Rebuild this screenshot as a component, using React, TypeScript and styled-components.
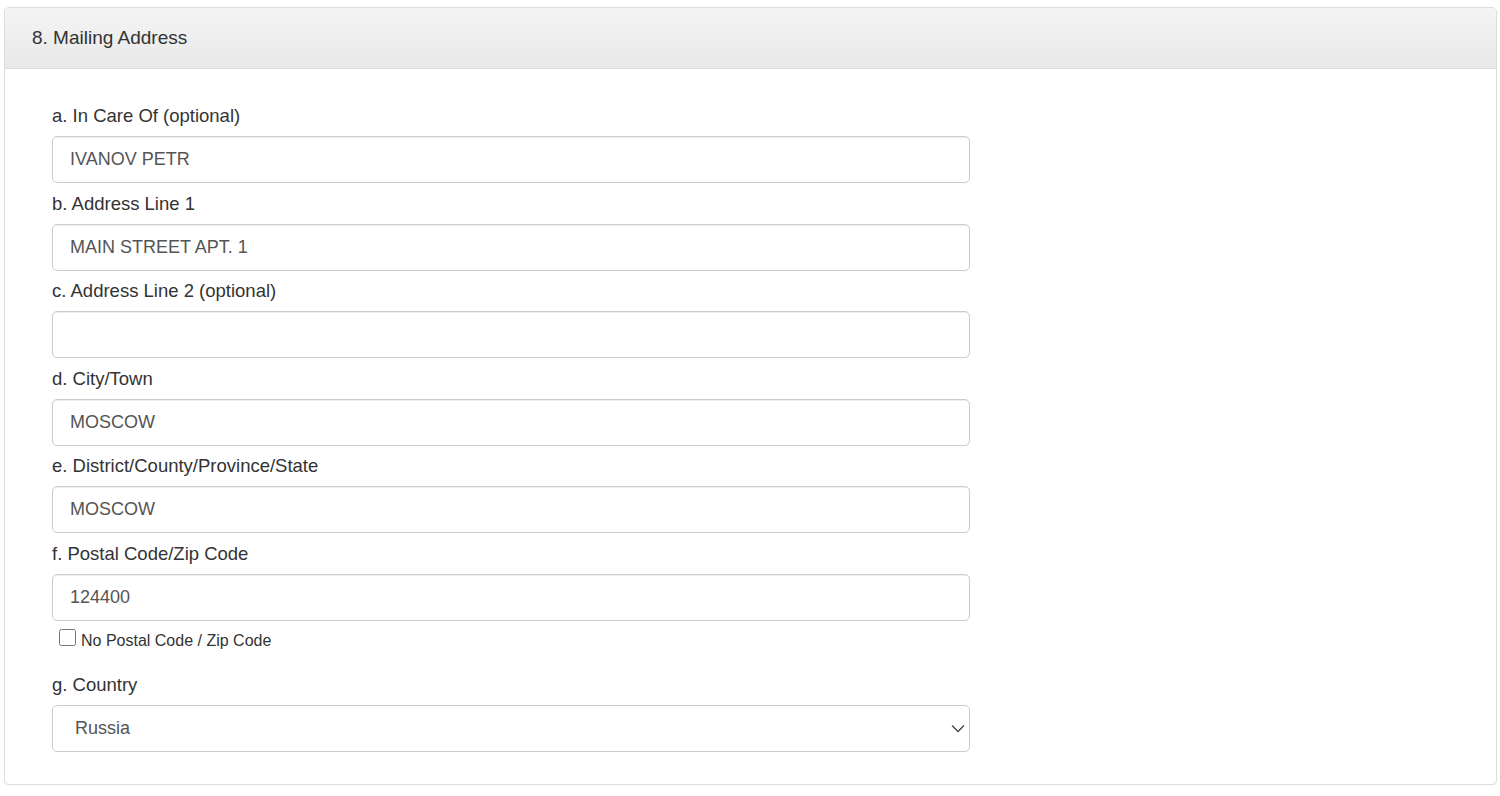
import * as React from 'react'
import styled, { createGlobalStyle } from 'styled-components'

const GlobalStyle = createGlobalStyle`
  html, body {
    margin: 0;
    padding: 0;
    background: #fff;
  }
  body {
    font-family: "Liberation Sans", Arial, Helvetica, sans-serif;
    color: #333;
  }
`

const Page = styled.div`
  padding: 7px 3px 0 4px;
`

const Panel = styled.section`
  border: 1px solid #ddd;
  border-radius: 5px;
  background: #fff;
  box-shadow: 0 1px 1px rgba(0, 0, 0, 0.05);
`

const Heading = styled.header`
  height: 60px;
  display: flex;
  align-items: center;
  padding: 0 27px;
  border-bottom: 1px solid #ddd;
  border-radius: 4px 4px 0 0;
  background: linear-gradient(to bottom, #f5f5f5 0%, #e8e8e8 100%);
  font-size: 19px;
  color: #333;
`

const Body = styled.div`
  padding: 34px 47px 32px;
`

const Group = styled.div<{ $gap?: number }>`
  width: 918px;
  margin-bottom: ${p => (p.$gap ?? 7.5)}px;
`

const Label = styled.label`
  display: block;
  font-size: 18.5px;
  line-height: 26px;
  margin-bottom: 7px;
  color: #333;
`

const Input = styled.input`
  box-sizing: border-box;
  display: block;
  width: 100%;
  height: 47px;
  padding: 0 17px;
  border: 1px solid #ccc;
  border-radius: 5px;
  font-family: inherit;
  font-size: 18px;
  color: #555;
  background: #fff;
  box-shadow: inset 0 1px 1px rgba(0, 0, 0, 0.075);
  outline: none;
`

const SelectWrap = styled.div`
  position: relative;
`

const Select = styled.select`
  box-sizing: border-box;
  display: block;
  width: 100%;
  height: 47px;
  padding: 0 22px;
  border: 1px solid #ccc;
  border-radius: 5px;
  font-family: inherit;
  font-size: 18px;
  color: #555;
  background: #fff;
  appearance: none;
  outline: none;
`

const Chevron = styled.svg`
  position: absolute;
  right: 5px;
  top: 19px;
  pointer-events: none;
`

const CheckRow = styled.label`
  display: flex;
  align-items: center;
  gap: 5px;
  height: 22px;
  margin: 9px 0 20px 7px;
  font-size: 16px;
  color: #333;
`

const Box = styled.input`
  margin: 0;
  width: 17px;
  height: 17px;
  position: relative;
  top: -3px;
  accent-color: #555;
`

const fields = [
  { id: 'careof', label: 'a. In Care Of (optional)', value: 'IVANOV PETR' },
  { id: 'line1', label: 'b. Address Line 1', value: 'MAIN STREET APT. 1' },
  { id: 'line2', label: 'c. Address Line 2 (optional)', value: '' },
  { id: 'city', label: 'd. City/Town', value: 'MOSCOW' },
  { id: 'state', label: 'e. District/County/Province/State', value: 'MOSCOW' },
  { id: 'zip', label: 'f. Postal Code/Zip Code', value: '124400' },
]

export default function App() {
  return (
    <Page>
      <GlobalStyle />
      <Panel>
        <Heading>8. Mailing Address</Heading>
        <Body>
          {fields.map((f, i) => (
            <Group key={f.id} $gap={i === fields.length - 1 ? 0 : 7.5}>
              <Label htmlFor={f.id}>{f.label}</Label>
              <Input id={f.id} defaultValue={f.value} />
            </Group>
          ))}
          <CheckRow>
            <Box type="checkbox" />
            No Postal Code / Zip Code
          </CheckRow>
          <Group $gap={0}>
            <Label htmlFor="country">g. Country</Label>
            <SelectWrap>
              <Select id="country" defaultValue="Russia">
                <option>Russia</option>
              </Select>
              <Chevron width="14" height="9" viewBox="0 0 14 9">
                <path d="M1 1.5 L7 7.5 L13 1.5" fill="none" stroke="#444" strokeWidth="1.3" />
              </Chevron>
            </SelectWrap>
          </Group>
        </Body>
      </Panel>
    </Page>
  )
}
